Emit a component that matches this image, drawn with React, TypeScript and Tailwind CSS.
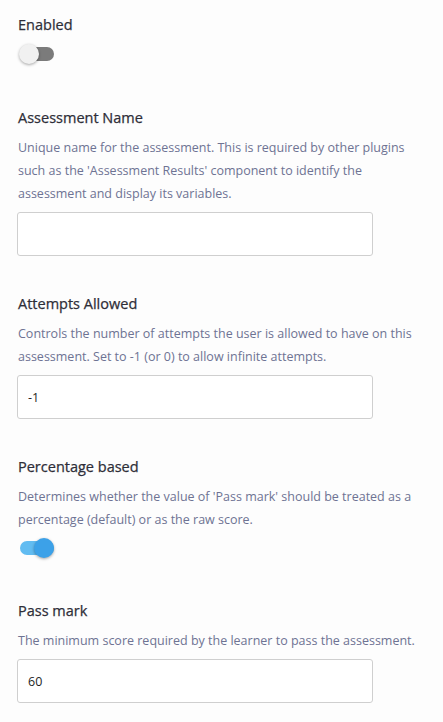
import React, { useState } from "react";

function Toggle({ on, onChange }: { on: boolean; onChange: () => void }) {
  return (
    <button
      type="button"
      onClick={onChange}
      className="relative block h-5 w-[36px] ml-[19px]"
      aria-pressed={on}
    >
      {/* track */}
      <span
        className={`absolute left-[1px] top-[3px] h-[14px] w-[34px] rounded-full ${
          on ? "bg-[#62bcf1]" : "bg-[#7b7b7b]"
        }`}
      />
      {/* thumb */}
      <span
        className={`absolute top-0 h-5 w-5 rounded-full shadow-[0_1px_3px_rgba(0,0,0,0.35)] ${
          on ? "left-[15px] bg-[#3ca1e8]" : "left-0 bg-[#f1f1f1]"
        }`}
      />
    </button>
  );
}

function Title({ children }: { children: React.ReactNode }) {
  return (
    <h3 className="text-[14.5px] leading-5 font-normal text-[#2e2e38] [-webkit-text-stroke:0.25px_#2e2e38]">
      {children}
    </h3>
  );
}

function Help({ children }: { children: React.ReactNode }) {
  return (
    <p className="mt-2 text-[12.5px] leading-[23px] text-[#6e7393]">
      {children}
    </p>
  );
}

function Field({ value }: { value: string }) {
  const [v, setV] = useState(value);
  return (
    <input
      value={v}
      onChange={(e) => setV(e.target.value)}
      className="mt-[7px] block h-11 w-[356px] -ml-px rounded-[3px] border border-[#cfcfcf] bg-white px-[10px] text-[12.5px] text-[#1f1f1f] outline-none"
    />
  );
}

export default function App() {
  const [enabled, setEnabled] = useState(false);
  const [percentage, setPercentage] = useState(true);

  return (
    <div
      className="min-h-screen bg-[#fdfdfd] px-[18px] pt-[15px]"
      style={{ fontFamily: '"Open Sans", "Noto Sans", sans-serif' }}
    >
      {/* Enabled */}
      <section>
        <Title>Enabled</Title>
        <div className="mt-[9px] -ml-[18px]">
          <Toggle on={enabled} onChange={() => setEnabled(!enabled)} />
        </div>
      </section>

      {/* Assessment Name */}
      <section className="mt-[44px]">
        <Title>Assessment Name</Title>
        <Help>
          Unique name for the assessment. This is required by other plugins
          such as the 'Assessment Results' component to identify the
          assessment and display its variables.
        </Help>
        <Field value="" />
      </section>

      {/* Attempts Allowed */}
      <section className="mt-[38px]">
        <Title>Attempts Allowed</Title>
        <Help>
          Controls the number of attempts the user is allowed to have on this
          assessment. Set to -1 (or 0) to allow infinite attempts.
        </Help>
        <Field value="-1" />
      </section>

      {/* Percentage based */}
      <section className="mt-[38px]">
        <Title>Percentage based</Title>
        <Help>
          Determines whether the value of 'Pass mark' should be treated as a
          percentage (default) or as the raw score.
        </Help>
        <div className="mt-[7px] -ml-[18px]">
          <Toggle on={percentage} onChange={() => setPercentage(!percentage)} />
        </div>
      </section>

      {/* Pass mark */}
      <section className="mt-[43px]">
        <Title>Pass mark</Title>
        <Help>The minimum score required by the learner to pass the assessment.</Help>
        <Field value="60" />
      </section>
    </div>
  );
}
